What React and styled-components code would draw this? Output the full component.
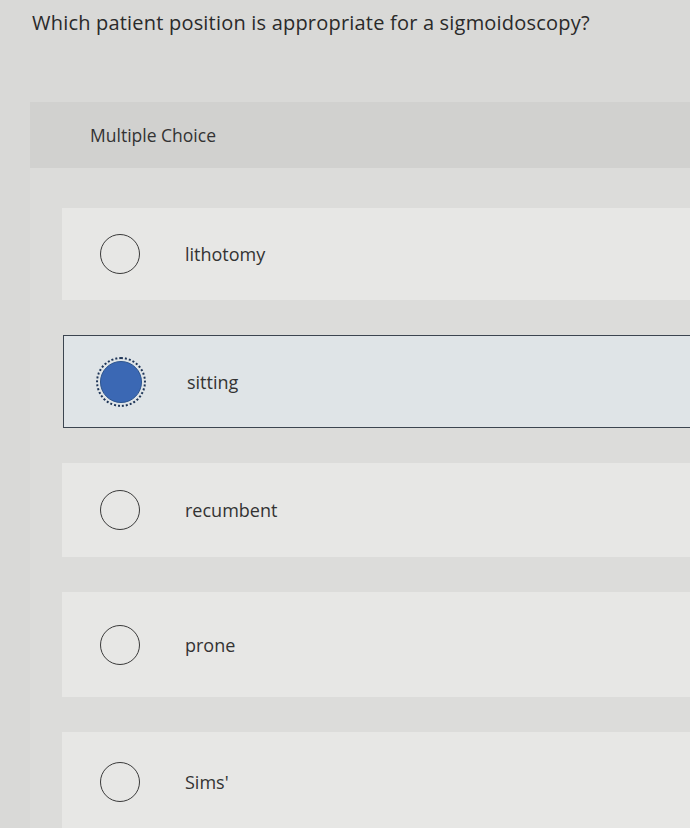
import styled, { createGlobalStyle } from "styled-components";

const GlobalStyle = createGlobalStyle`
  html, body {
    margin: 0;
    padding: 0;
    background: #d8d8d6;
  }
  body {
    font-family: "Open Sans", "Liberation Sans", sans-serif;
    color: #333;
  }
`;

const Page = styled.div`
  width: 690px;
  height: 828px;
  overflow: hidden;
  background: #d9d9d7;
`;

const Question = styled.h1`
  margin: 0;
  padding: 9px 0 0 32px;
  height: 102px;
  box-sizing: border-box;
  font-size: 20px;
  font-weight: 400;
  color: #2a2a2a;
  letter-spacing: 0.2px;
`;

const Panel = styled.section`
  margin-left: 30px;
  background: #dcdcda;
  padding-bottom: 40px;
`;

const PanelHeader = styled.div`
  height: 66px;
  display: flex;
  align-items: center;
  padding-left: 60px;
  background: #d1d1cf;
  font-size: 17.5px;
  color: #333;
`;

const Options = styled.ul`
  list-style: none;
  margin: 0;
  padding: 40px 0 0 32px;
  display: flex;
  flex-direction: column;
  gap: 35px;
`;

const Option = styled.li`
  height: ${(p) => p.$h}px;
  box-sizing: border-box;
  display: flex;
  align-items: center;
  padding-left: ${(p) => (p.$selected ? "36px" : "38px")};
  gap: 45px;
  background: ${(p) => (p.$selected ? "#dfe4e7" : "#e7e7e5")};
  border: ${(p) => (p.$selected ? "1.5px solid #3c4550" : "none")};
  border-right: none;
  margin-left: ${(p) => (p.$selected ? "1px" : "0")};
  font-size: 18px;
  color: #333;
`;

const Radio = styled.span`
  width: 40px;
  height: 40px;
  flex: none;
  border-radius: 50%;
  box-sizing: border-box;
  border: 1.5px solid #3a3a3a;
`;

const SelectedRadio = styled.span`
  width: 42px;
  height: 42px;
  flex: none;
  margin: -1px 0;
  border-radius: 50%;
  background: #3b68b4;
  border: 1px solid #2c548f;
  box-sizing: border-box;
  outline: 2.5px dotted #1e3558;
  outline-offset: 2px;
`;

const choices = [
  { label: "lithotomy", h: 92 },
  { label: "sitting", h: 93 },
  { label: "recumbent", h: 94 },
  { label: "prone", h: 105 },
  { label: "Sims'", h: 100 },
];

export default function App() {
  const selected = 1;
  return (
    <Page>
      <GlobalStyle />
      <Question>Which patient position is appropriate for a sigmoidoscopy?</Question>
      <Panel>
        <PanelHeader>Multiple Choice</PanelHeader>
        <Options>
          {choices.map((c, i) => (
            <Option key={c.label} $h={c.h} $selected={i === selected}>
              {i === selected ? <SelectedRadio /> : <Radio />}
              <span>{c.label}</span>
            </Option>
          ))}
        </Options>
      </Panel>
    </Page>
  );
}
